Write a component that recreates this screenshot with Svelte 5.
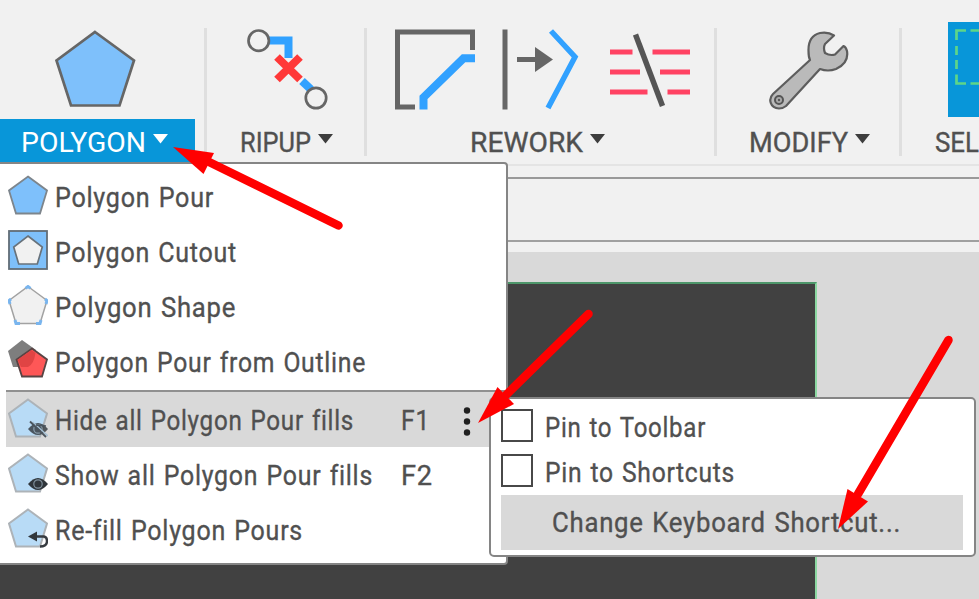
<script>
  const shapes = [
    { text: 'Polygon Pour', width: 157, icon: 'pour' },
    { text: 'Polygon Cutout', width: 180, icon: 'cutout' },
    { text: 'Polygon Shape', width: 179, icon: 'shape' },
    { text: 'Polygon Pour from Outline', width: 309, icon: 'outline' },
  ];
  const fills = [
    { text: 'Hide all Polygon Pour fills', width: 297, icon: 'hide', key: 'F1', keyWidth: 27, active: true },
    { text: 'Show all Polygon Pour fills', width: 316, icon: 'show', key: 'F2', keyWidth: 30 },
    { text: 'Re-fill Polygon Pours', width: 246, icon: 'refill' },
  ];
  const pins = [
    { text: 'Pin to Toolbar', width: 159 },
    { text: 'Pin to Shortcuts', width: 188 },
  ];
  const pentagon = 'M20 1.5 39 15.5 32 38.5H8L1 15.5Z';
</script>

{#snippet label(text, width)}
  <svg class="label" {width} height="30">
    <text x="-1" y="25" textLength={width + 2} lengthAdjust="spacingAndGlyphs">{text}</text>
  </svg>
{/snippet}

{#snippet caret()}
  <svg class="caret" width="15" height="10"><path d="M0 0H15L7.5 9.5Z" /></svg>
{/snippet}

{#snippet caption(text, width)}
  <div class="caption">
    {@render label(text, width)}
    {@render caret()}
  </div>
{/snippet}

{#snippet icon(kind)}
  <svg class="icon" width="40" height="40" viewBox="0 0 40 40">
    {#if kind === 'pour'}
      <path d={pentagon} fill="#7ec0fb" stroke="#7d858c" stroke-width="1.8" />
    {:else if kind === 'cutout'}
      <rect x="1" y="1" width="38" height="38" fill="#7ec0fb" stroke="#626d77" stroke-width="1.8" />
      <path d="M20 6 34.3 17 29.3 34H10.7L5.7 17Z" fill="#f1f1f1" stroke="#68727b" stroke-width="1.7" />
    {:else if kind === 'shape'}
      <path d={pentagon} fill="#f1f1f1" stroke="#a2a2a2" stroke-width="1.5" />
      <path d="M17.5 3.4 20 1.5 22.500 3.400M37 14 39 15.500 38 19M33 35 32 38.500H28M12 38.500H8L7 35M2 19 1 15.500 3 14" fill="none" stroke="#79b5ee" stroke-width="3" />
    {:else if kind === 'outline'}
      <path d="M14 0 28 10 22 27H5L0 11Z" fill="#7e7e7e" />
      <path d="M24 8.500 39 19.500 34 36.500H14L8.500 19.500Z" fill="#fe5757" stroke="#584444" stroke-width="1.800" />
      <path d="M23.500 10 27.500 13Q26 24 20 27H13L9.500 19.800Z" fill="#e04444" />
    {:else}
      <path d={pentagon} fill="#b8dbf6" stroke="#adb3b8" stroke-width="2" />
      {#if kind === 'show' || kind === 'hide'}
        <g opacity={kind === 'hide' ? 0.8 : 1}>
          <path d="M20 31Q30 19 40 31Q30 43 20 31Z" fill="#30363b" />
          <circle cx="30" cy="31" r="4.200" fill="none" stroke="#7f8f9b" stroke-width="1.200" />
        </g>
        {#if kind === 'hide'}
          <path d="M24.500 24 40 38" stroke="#a5c0d4" stroke-width="1.600" />
          <path d="M22 23.500 38 39" stroke="#4b555e" stroke-width="1.800" />
          <path d="M28 27 38 28" stroke="#4b555e" stroke-width="1.500" />
        {/if}
      {:else}
        <path d="M25 28.500H36Q39 29 39 33Q39 38.500 32 38.500" fill="none" stroke="#363b40" stroke-width="2.400" />
        <path d="M20 28.500 29 23.500V33.500Z" fill="#30363b" />
      {/if}
    {/if}
  </svg>
{/snippet}

{#snippet row(item)}
  <div class="row" class:active={item.active}>
    {@render icon(item.icon)}
    <div class="name">{@render label(item.text, item.width)}</div>
    {#if item.key}{@render label(item.key, item.keyWidth)}{/if}
    {#if item.active}
      <svg class="dots" width="8" height="32"><circle cx="4" cy="4.5" r="3.2" /><circle cx="4" cy="15.5" r="3.2" /><circle cx="4" cy="26.5" r="3.2" /></svg>
    {/if}
  </div>
{/snippet}

<div class="app">
  <header>
    <section class="polygon">
      <div class="tools">
        <svg width="82" height="82" viewBox="54 29 82 82"><path d="M95 32 134 60.5 119.5 105.5H71L56.5 60.5Z" fill="#7ec0fb" stroke="#666" stroke-width="2.7" /></svg>
      </div>
      {@render caption('POLYGON', 123)}
    </section>
    <i class="sep"></i>
    <section class="ripup">
      <div class="tools">
        <svg width="82" height="82" viewBox="247 29 82 82" fill="none">
          <path d="M269 40.5H288.5V58" stroke="#31a1ff" stroke-width="8" />
          <path d="M302 81 311 89.5" stroke="#31a1ff" stroke-width="8" />
          <path d="M277 57 300 79.500M300 57 277 79.500" stroke="#ff3838" stroke-width="8" />
          <circle cx="258.700" cy="40.700" r="10.200" fill="#f1f1f1" stroke="#666" stroke-width="2.700" />
          <circle cx="316" cy="98" r="10.200" fill="#f1f1f1" stroke="#666" stroke-width="2.700" />
        </svg>
      </div>
      {@render caption('RIPUP', 69)}
    </section>
    <i class="sep"></i>
    <section class="rework">
      <div class="tools">
        <svg width="297" height="82" viewBox="394 29 297 82" fill="none">
          <path d="M415 107H397.500V32H472.500V50" stroke="#666" stroke-width="5" />
          <path d="M423.500 109.500V97.500L463.500 58.300H475" stroke="#31a1ff" stroke-width="8" />
          <path d="M505 29.500V109.500M517 59.500H536" stroke="#666" stroke-width="5" />
          <path d="M535 47 553 59.500 535 72Z" fill="#666" />
          <path d="M551 31 575 57 548 108" stroke="#31a1ff" stroke-width="5.500" />
          <path d="M610 52H632.500M652.500 52H690M610 72H640M660 72H690M610 92H647.500M667.500 92H690" stroke="#ff4263" stroke-width="5" />
          <path d="M635.500 34.500 662.500 106" stroke="#555" stroke-width="5.500" />
        </svg>
      </div>
      {@render caption('REWORK', 111)}
    </section>
    <i class="sep"></i>
    <section class="modify">
      <div class="tools">
        <svg width="82" height="82" viewBox="768 29 82 82">
          <path d="M834 35.500Q828 31.500 820 33Q808 36 808.500 51Q808.500 57 810 60L773 94C768 99 770 108 779 108.500Q783 108.500 786 106L820 69Q828 72 836 69Q849 63 847 51Q846 47 843.500 46L835 54.500Q830 56 825 53Q823 48 825 44Z" fill="#bababa" stroke="#5d5d5d" stroke-width="2.200" stroke-linejoin="round" />
          <circle cx="779" cy="100" r="4" fill="#aaa" stroke="#555" stroke-width="2" /><circle cx="779" cy="100" r="1.200" fill="#555" />
        </svg>
      </div>
      {@render caption('MODIFY', 97)}
    </section>
    <i class="sep"></i>
    <section class="select">
      <div class="tools">
        <svg width="95" height="95" viewBox="0 0 95 95">
          <rect width="95" height="95" fill="#0896d9" />
          <path d="M8.500 18V8.500H18M22.500 8.500H32M8.500 24V33M8.500 38V47M8.500 52.500V61.500H18M22.500 61.500H32" fill="none" stroke="#5ed588" stroke-width="2.700" />
        </svg>
      </div>
      <div class="caption">{@render label('SEL', 42)}</div>
    </section>
  </header>
  <div class="bar"></div>
  <main><div class="board"></div></main>

  <div class="menu">
    {#each shapes as item}{@render row(item)}{/each}
    <hr />
    {#each fills as item}{@render row(item)}{/each}
  </div>

  <div class="submenu">
    {#each pins as pin}
      <div class="pin"><span class="box"></span>{@render label(pin.text, pin.width)}</div>
    {/each}
    <div class="change">{@render label('Change Keyboard Shortcut...', 347)}</div>
  </div>

  <svg class="arrows" width="979" height="599">
    <g stroke="#f00" stroke-width="8.5" stroke-linecap="round">
      <path d="M338.500 225.500 205 160" />
      <path d="M588.500 314 505 396" />
      <path d="M948.500 340 858 494" />
    </g>
    <g fill="#f00">
      <path d="M173 147 214 153 203.500 174Z" />
      <path d="M478 423 497.500 387 514 404Z" />
      <path d="M838 529 847.500 489 868 501.500Z" />
    </g>
  </svg>
</div>

<style>
  :global(body) { margin: 0; }
  .app { position: relative; width: 979px; height: 599px; overflow: hidden; display: flex; flex-direction: column; background: #f1f1f1; color: #444; }
  svg { display: block; flex: none; }
  .label { overflow: visible; }
  .label text { font: 400 27px Roboto, "Liberation Sans", sans-serif; fill: #505050; stroke: #505050; stroke-width: 0.35px; letter-spacing: 0.8px; word-spacing: 1.5px; }
  header { display: flex; height: 164px; flex: none; border-bottom: 2px solid #e4e4e4; }
  section { flex: none; display: flex; flex-direction: column; }
  .sep { flex: none; width: 3px; height: 128px; margin-top: 28px; background: #dfdfdf; }
  .tools { box-sizing: border-box; height: 119px; flex: none; padding-top: 29px; }
  .caption { height: 43px; display: flex; align-items: flex-start; gap: 8px; padding-top: 8px; box-sizing: border-box; }
  .caption .label text { letter-spacing: 0; }
  .caret { margin-top: 7px; fill: #3d3d3d; }
  .polygon { width: 195px; margin-right: 9px; }
  .polygon .tools { padding-left: 54px; }
  .polygon .caption { background: #0896d9; padding-left: 22px; }
  .polygon .caption .label text { fill: #fff; stroke: none; }
  .polygon .caret { fill: #fff; }
  .ripup { width: 157px; }
  .ripup .tools { padding-left: 40px; }
  .ripup .caption { padding-left: 34px; }
  .rework { width: 347px; }
  .rework .tools { padding-left: 27px; }
  .rework .caption { padding-left: 104px; }
  .modify { width: 182px; }
  .modify .tools { padding-left: 51px; }
  .modify .caption { padding-left: 33px; }
  .select { width: 77px; overflow: hidden; }
  .select .tools { padding: 22px 0 0 46px; }
  .select .caption { padding-left: 34px; }
  .bar { flex: none; height: 61px; margin: 11px 0 10px; border-top: 2px solid #999; border-bottom: 2px solid #a0a0a0; }
  main { flex: 1; background: #d9d9d9; padding-top: 30px; display: flex; }
  .board { width: 815px; background: #414141; border-top: 2px solid #4d966a; border-right: 2px solid #8bd8a1; }
  .menu { position: absolute; left: -4px; top: 162px; width: 512px; height: 403px; box-sizing: border-box; padding-top: 5px; background: #fff; border: 2px solid #858585; border-radius: 4px; }
  .row { height: 55px; box-sizing: border-box; margin: 0 0 0 8px; padding: 6px 0 0 2px; display: flex; align-items: flex-start; }
  .row.active { background: #d9d9d9; }
  .row .label { margin-top: 7px; }
  .name { width: 346px; margin-left: 8px; flex: none; }
  .dots { margin: 8px 0 0 34px; fill: #202020; }
  .menu hr { border: 0; height: 2px; margin: 1px 0 0 8px; background: #909090; }
  .submenu { position: absolute; left: 489px; top: 397px; width: 487px; height: 160px; box-sizing: border-box; padding: 10px 11px 0 10px; background: #fff; border: 2px solid #858585; border-radius: 5px; }
  .pin { display: flex; align-items: flex-start; gap: 13px; height: 45px; }
  .pin .label { margin-top: 3px; }
  .box { box-sizing: border-box; width: 32px; height: 33px; border: 2px solid #484848; }
  .change { height: 55px; margin-top: -4px; box-sizing: border-box; padding: 12px 0 0 52px; background: #d9d9d9; }
  .arrows { position: absolute; left: 0; top: 0; }
</style>
